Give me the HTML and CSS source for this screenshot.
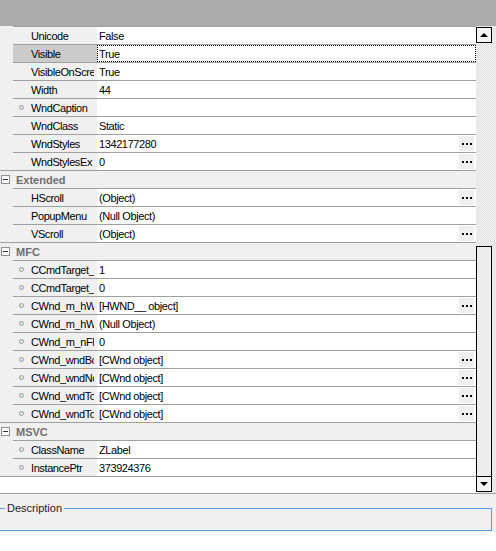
FILE: index.html
```html
<!DOCTYPE html>
<html lang="en">
<head>
    <meta charset="UTF-8">
    <title>Properties</title>
    <link rel="stylesheet" href="styles.css">
</head>
<body>

<div class="panel">
    <div class="titlebar"></div>

    <div class="grid-wrap">
        <div class="grid">
            <div class="row"><div class="gutter"></div><div class="cells"><div class="name"><span class="mark"></span><span class="label">Unicode</span></div><div class="value">False</div></div></div>
            <div class="row"><div class="gutter"></div><div class="cells"><div class="name selected"><span class="mark"></span><span class="label">Visible</span></div><div class="value focused">True</div></div></div>
            <div class="row"><div class="gutter"></div><div class="cells"><div class="name"><span class="mark"></span><span class="label">VisibleOnScreen</span></div><div class="value">True</div></div></div>
            <div class="row"><div class="gutter"></div><div class="cells"><div class="name"><span class="mark"></span><span class="label">Width</span></div><div class="value">44</div></div></div>
            <div class="row"><div class="gutter"></div><div class="cells"><div class="name"><span class="mark on"></span><span class="label">WndCaption</span></div><div class="value"></div></div></div>
            <div class="row"><div class="gutter"></div><div class="cells"><div class="name"><span class="mark"></span><span class="label">WndClass</span></div><div class="value">Static</div></div></div>
            <div class="row"><div class="gutter"></div><div class="cells"><div class="name"><span class="mark"></span><span class="label">WndStyles</span></div><div class="value">1342177280<span class="more"><i></i><i></i><i></i></span></div></div></div>
            <div class="row"><div class="gutter"></div><div class="cells"><div class="name"><span class="mark"></span><span class="label">WndStylesEx</span></div><div class="value">0<span class="more"><i></i><i></i><i></i></span></div></div></div>

            <div class="row group"><div class="gutter"><span class="toggle"></span></div><div class="cells">Extended</div></div>
            <div class="row"><div class="gutter"></div><div class="cells"><div class="name"><span class="mark"></span><span class="label">HScroll</span></div><div class="value">(Object)<span class="more"><i></i><i></i><i></i></span></div></div></div>
            <div class="row"><div class="gutter"></div><div class="cells"><div class="name"><span class="mark"></span><span class="label">PopupMenu</span></div><div class="value">(Null Object)</div></div></div>
            <div class="row"><div class="gutter"></div><div class="cells"><div class="name"><span class="mark"></span><span class="label">VScroll</span></div><div class="value">(Object)<span class="more"><i></i><i></i><i></i></span></div></div></div>

            <div class="row group"><div class="gutter"><span class="toggle"></span></div><div class="cells">MFC</div></div>
            <div class="row"><div class="gutter"></div><div class="cells"><div class="name"><span class="mark on"></span><span class="label">CCmdTarget_m_dwRef</span></div><div class="value">1</div></div></div>
            <div class="row"><div class="gutter"></div><div class="cells"><div class="name"><span class="mark on"></span><span class="label">CCmdTarget_m_nFlags</span></div><div class="value">0</div></div></div>
            <div class="row"><div class="gutter"></div><div class="cells"><div class="name"><span class="mark on"></span><span class="label">CWnd_m_hWnd</span></div><div class="value">[HWND__ object]<span class="more"><i></i><i></i><i></i></span></div></div></div>
            <div class="row"><div class="gutter"></div><div class="cells"><div class="name"><span class="mark on"></span><span class="label">CWnd_m_hWndOwner</span></div><div class="value">(Null Object)</div></div></div>
            <div class="row"><div class="gutter"></div><div class="cells"><div class="name"><span class="mark on"></span><span class="label">CWnd_m_nFlags</span></div><div class="value">0</div></div></div>
            <div class="row"><div class="gutter"></div><div class="cells"><div class="name"><span class="mark on"></span><span class="label">CWnd_wndBottom</span></div><div class="value">[CWnd object]<span class="more"><i></i><i></i><i></i></span></div></div></div>
            <div class="row"><div class="gutter"></div><div class="cells"><div class="name"><span class="mark on"></span><span class="label">CWnd_wndNoTopMost</span></div><div class="value">[CWnd object]<span class="more"><i></i><i></i><i></i></span></div></div></div>
            <div class="row"><div class="gutter"></div><div class="cells"><div class="name"><span class="mark on"></span><span class="label">CWnd_wndTop</span></div><div class="value">[CWnd object]<span class="more"><i></i><i></i><i></i></span></div></div></div>
            <div class="row"><div class="gutter"></div><div class="cells"><div class="name"><span class="mark on"></span><span class="label">CWnd_wndTopMost</span></div><div class="value">[CWnd object]<span class="more"><i></i><i></i><i></i></span></div></div></div>

            <div class="row group"><div class="gutter"><span class="toggle"></span></div><div class="cells">MSVC</div></div>
            <div class="row"><div class="gutter"></div><div class="cells"><div class="name"><span class="mark on"></span><span class="label">ClassName</span></div><div class="value">ZLabel</div></div></div>
            <div class="row"><div class="gutter"></div><div class="cells"><div class="name"><span class="mark on"></span><span class="label">InstancePtr</span></div><div class="value">373924376</div></div></div>

            <div class="filler"></div>
        </div>

        <div class="scrollbar">
            <div class="sb-btn up"></div>
            <div class="sb-track"></div>
            <div class="sb-thumb"></div>
            <div class="sb-btn down"></div>
        </div>
    </div>

    <div class="desc">
        <fieldset class="desc-box">
            <legend>Description</legend>
        </fieldset>
    </div>
</div>

</body>
</html>
```

FILE: styles.css
```css
body {
    margin: 0;
    background-color: #fff;
    font-family: "Liberation Sans", Arial, sans-serif;
    font-size: 11px;
    color: #000;
}
.titlebar {
    height: 26px;
    background-color: #ababab;
}
.grid-wrap {
    display: flex;
    height: 467px;
}
.grid {
    width: 476px;
    display: flex;
    flex-direction: column;
}
.row {
    display: flex;
    height: 18px;
    box-sizing: border-box;
    background-color: #f0f0f0;
}
.gutter {
    width: 13px;
    flex: none;
    display: flex;
    align-items: center;
}
.cells {
    flex: 1;
    display: flex;
    border-top: 1px solid #a0a0a0;
    min-width: 0;
}
.name {
    width: 84px;
    flex: none;
    display: flex;
    align-items: center;
    padding: 0 3px 0 6px;
    box-sizing: border-box;
}
.name.selected {
    background-color: #cbcbcb;
}
.label {
    flex: 1;
    min-width: 0;
    overflow: hidden;
    white-space: nowrap;
    letter-spacing: -0.4px;
}
.mark {
    width: 5px;
    height: 5px;
    flex: none;
    margin-right: 7px;
    border-radius: 50%;
    box-sizing: border-box;
}
.mark.on {
    border: 1px solid #9a9a9a;
    background-color: #e4e4e4;
}
.value {
    flex: 1;
    display: flex;
    align-items: center;
    padding-left: 2px;
    background-color: #fff;
    white-space: nowrap;
    letter-spacing: -0.4px;
}
.value.focused {
    outline: 1px dotted #000;
    outline-offset: -1px;
}
.more {
    margin-left: auto;
    margin-right: 2px;
    width: 15px;
    height: 15px;
    display: flex;
    align-items: center;
    justify-content: center;
    gap: 2px;
    background-color: #efefef;
}
.more i {
    width: 2px;
    height: 2px;
    background-color: #000;
}
.row.group {
    border-top: 1px solid #a0a0a0;
}
.row.group .cells {
    border-top: none;
    align-items: center;
    padding-left: 3px;
    font-weight: bold;
    color: #6e6e6e;
}
.toggle {
    width: 9px;
    height: 9px;
    margin-left: 1px;
    margin-top: -1px;
    box-sizing: border-box;
    border: 1px solid #8f8f8f;
    background-color: #fff;
    display: flex;
    align-items: center;
    justify-content: center;
}
.toggle::after {
    content: "";
    width: 5px;
    height: 1px;
    background-color: #333;
}
.filler {
    flex: 1;
    border-top: 1px solid #a0a0a0;
    background-color: #fff;
}
.scrollbar {
    width: 20px;
    display: flex;
    flex-direction: column;
    background: repeating-conic-gradient(#f6f6f6 0 25%, #dedede 0 50%) 0 0 / 2px 2px;
}
.sb-btn {
    width: 16px;
    height: 16px;
    box-sizing: border-box;
    border: 1px solid #000;
    background-color: #f3f3f3;
    display: flex;
    align-items: center;
    justify-content: center;
}
.sb-btn.up {
    margin-top: 1px;
}
.sb-btn.up::after {
    content: "";
    border-left: 4px solid transparent;
    border-right: 4px solid transparent;
    border-bottom: 4px solid #000;
}
.sb-btn.down::after {
    content: "";
    border-left: 4px solid transparent;
    border-right: 4px solid transparent;
    border-top: 4px solid #000;
}
.sb-track {
    height: 203px;
}
.sb-thumb {
    width: 16px;
    height: 230px;
    box-sizing: border-box;
    border: 1px solid #000;
    border-bottom: none;
    background-color: #ededed;
}
.desc {
    height: 38px;
    border-top: 1px solid #a0a0a0;
    background-color: #f0f0f0;
    overflow: hidden;
}
.desc-box {
    margin: 8px 4px 0 -1px;
    padding: 0;
    height: 29px;
    box-sizing: border-box;
    border: 1px solid #5c9de0;
    min-width: 0;
}
.desc-box legend {
    margin-left: 5px;
    padding: 0 2px;
    line-height: 13px;
    color: #222;
}
```
